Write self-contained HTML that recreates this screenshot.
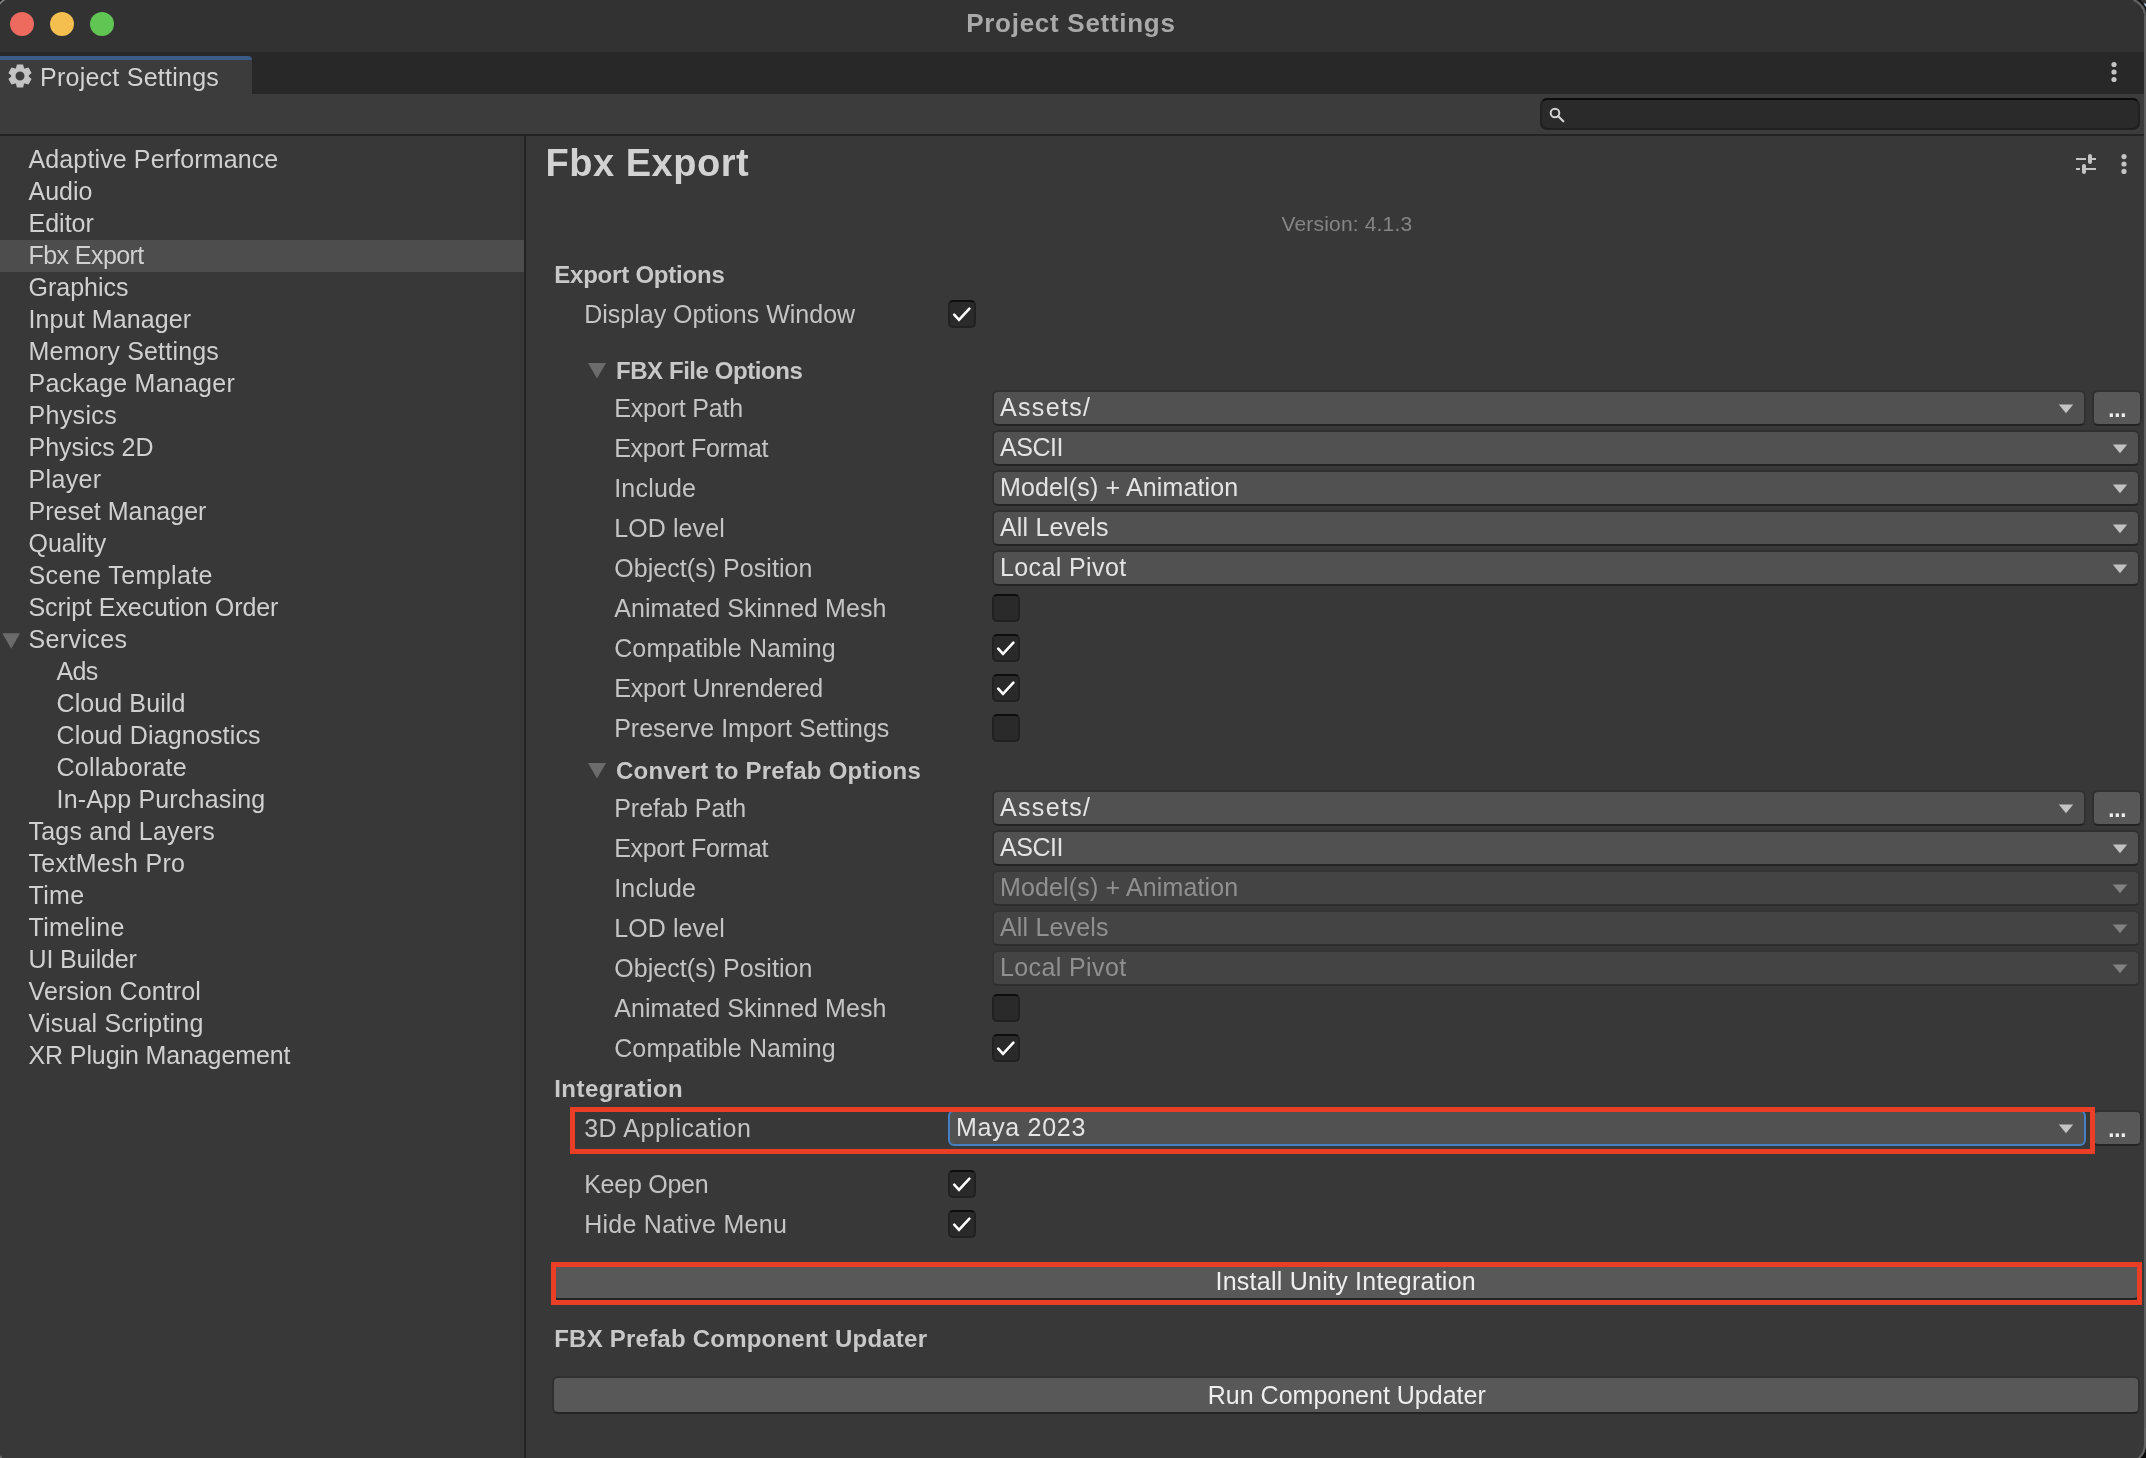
<!DOCTYPE html>
<html lang="en"><head><meta charset="utf-8"><title>Project Settings</title>
<style>
html,body{margin:0;padding:0;}
body{width:2146px;height:1458px;overflow:hidden;background:#383838;font-family:"Liberation Sans", sans-serif;color:#c4c4c4;}
#win{position:absolute;left:0;top:0;width:2146px;height:1458px;overflow:hidden;background:#383838;will-change:transform;}
.abs{position:absolute;}
.t{position:absolute;white-space:nowrap;font-size:25px;height:40px;line-height:40px;color:#c4c4c4;}
.b{font-weight:700;font-size:24px;color:#c8c8c8;}
.side{color:#d0d0d0;height:32px;line-height:32px;}
.dd{position:absolute;box-sizing:border-box;height:36px;border:2px solid #303030;border-bottom-color:#242424;border-radius:6px;background:#515151;}
.v{position:absolute;height:32px;line-height:32px;font-size:25px;color:#e4e4e4;white-space:nowrap;}
.dd.dis{background:#444444;border-color:#343434;border-bottom-color:#2e2e2e;}
.v.dis{color:#909090;}
.dd svg{position:absolute;right:10px;top:12px;}
.btn{position:absolute;box-sizing:border-box;height:36px;border:2px solid #303030;border-bottom-color:#242424;border-radius:6px;background:#585858;}
.bt{position:absolute;height:34px;line-height:34px;font-size:25px;color:#eeeeee;white-space:nowrap;}
.cb{position:absolute;box-sizing:border-box;width:28px;height:28px;border:2px solid #212121;border-top-color:#0d0d0d;border-radius:5px;background:#2a2a2a;}
.cb svg{position:absolute;left:-2px;top:-2px;}
.red{position:absolute;box-sizing:border-box;border:5px solid #ea3f26;}

</style></head><body><div id="win">
<div class="abs" style="left:0;top:0;width:2146px;height:52px;background:#323232;"></div>
<div class="abs" style="left:10px;top:12px;width:24px;height:24px;border-radius:50%;background:#ed6a5e;"></div>
<div class="abs" style="left:50px;top:12px;width:24px;height:24px;border-radius:50%;background:#f5bf4f;"></div>
<div class="abs" style="left:90px;top:12px;width:24px;height:24px;border-radius:50%;background:#61c554;"></div>
<div class="abs" id="wtitle" style="left:966.20px;top:0px;letter-spacing:0.720px;height:46px;line-height:46px;font-weight:700;font-size:26px;color:#a9a9a9;white-space:nowrap;">Project Settings</div>
<div class="abs" style="left:0;top:52px;width:2146px;height:42px;background:#282828;"></div>
<div class="abs" style="left:0;top:56px;width:252px;height:38px;background:#3c3c3c;border-top:4px solid #3a5c87;box-sizing:border-box;border-top-right-radius:4px;"></div>
<svg class="abs" style="left:0;top:56px" width="44" height="40" viewBox="0 56 44 40"><path d="M24.00 68.16 L23.11 64.41 L16.89 64.41 L16.00 68.16 L15.21 68.62 L11.51 67.51 L8.41 72.89 L11.21 75.54 L11.21 76.46 L8.41 79.11 L11.51 84.49 L15.21 83.38 L16.00 83.84 L16.89 87.59 L23.11 87.59 L24.00 83.84 L24.79 83.38 L28.49 84.49 L31.59 79.11 L28.79 76.46 L28.79 75.54 L31.59 72.89 L28.49 67.51 L24.79 68.62Z M15.50 76.00 a4.5 4.5 0 1 0 9.0 0 a4.5 4.5 0 1 0 -9.0 0Z" fill="#c4c4c4" fill-rule="evenodd"/></svg>
<div class="t" id="tabtxt" style="left:40.00px;top:57px;letter-spacing:0.247px;color:#d2d2d2;">Project Settings</div>
<svg class="abs" style="left:2104px;top:56px" width="20" height="32"><circle cx="10" cy="8.5" r="2.6" fill="#c4c4c4"/><circle cx="10" cy="16" r="2.6" fill="#c4c4c4"/><circle cx="10" cy="23.5" r="2.6" fill="#c4c4c4"/></svg>
<div class="abs" style="left:0;top:94px;width:2146px;height:40px;background:#3c3c3c;"></div>
<div class="abs" style="left:0;top:134px;width:2146px;height:2px;background:#232323;"></div>
<div class="abs" style="left:1540px;top:98px;width:600px;height:32px;box-sizing:border-box;border:2px solid #212121;border-top-color:#0d0d0d;border-radius:7px;background:#2a2a2a;"></div>
<svg class="abs" style="left:1546px;top:104px" width="24" height="22" viewBox="1546 104 24 22"><circle cx="1555" cy="113" r="4.3" fill="none" stroke="#d2d2d2" stroke-width="2"/><path d="M1558.2 116.2 L1563.3 121.3" stroke="#d2d2d2" stroke-width="2.2" stroke-linecap="round"/></svg>
<div class="abs" style="left:524px;top:136px;width:2px;height:1322px;background:#232323;"></div>
<div class="abs" style="left:0;top:240px;width:524px;height:32px;background:#4d4d4d;"></div>
<div class="t side" id="s0" style="left:28.50px;top:143px;letter-spacing:0.126px;">Adaptive Performance</div>
<div class="t side" id="s1" style="left:28.50px;top:175px;letter-spacing:0.000px;">Audio</div>
<div class="t side" id="s2" style="left:28.50px;top:207px;letter-spacing:0.000px;">Editor</div>
<div class="t side" id="s3" style="left:28.50px;top:239px;letter-spacing:-0.567px;">Fbx Export</div>
<div class="t side" id="s4" style="left:28.50px;top:271px;letter-spacing:0.000px;">Graphics</div>
<div class="t side" id="s5" style="left:28.50px;top:303px;letter-spacing:0.117px;">Input Manager</div>
<div class="t side" id="s6" style="left:28.50px;top:335px;letter-spacing:0.200px;">Memory Settings</div>
<div class="t side" id="s7" style="left:28.50px;top:367px;letter-spacing:0.236px;">Package Manager</div>
<div class="t side" id="s8" style="left:28.50px;top:399px;letter-spacing:0.333px;">Physics</div>
<div class="t side" id="s9" style="left:28.50px;top:431px;letter-spacing:0.000px;">Physics 2D</div>
<div class="t side" id="s10" style="left:28.50px;top:463px;letter-spacing:0.360px;">Player</div>
<div class="t side" id="s11" style="left:28.50px;top:495px;letter-spacing:0.000px;">Preset Manager</div>
<div class="t side" id="s12" style="left:28.50px;top:527px;letter-spacing:0.000px;">Quality</div>
<div class="t side" id="s13" style="left:28.50px;top:559px;letter-spacing:0.400px;">Scene Template</div>
<div class="t side" id="s14" style="left:28.50px;top:591px;letter-spacing:-0.076px;">Script Execution Order</div>
<div class="t side" id="s15" style="left:28.50px;top:623px;letter-spacing:0.371px;">Services</div>
<div class="t side" id="s16" style="left:56.50px;top:655px;letter-spacing:-0.650px;">Ads</div>
<div class="t side" id="s17" style="left:56.50px;top:687px;letter-spacing:0.100px;">Cloud Build</div>
<div class="t side" id="s18" style="left:56.50px;top:719px;letter-spacing:0.163px;">Cloud Diagnostics</div>
<div class="t side" id="s19" style="left:56.50px;top:751px;letter-spacing:0.230px;">Collaborate</div>
<div class="t side" id="s20" style="left:56.50px;top:783px;letter-spacing:0.188px;">In-App Purchasing</div>
<div class="t side" id="s21" style="left:28.50px;top:815px;letter-spacing:0.207px;">Tags and Layers</div>
<div class="t side" id="s22" style="left:28.50px;top:847px;letter-spacing:0.336px;">TextMesh Pro</div>
<div class="t side" id="s23" style="left:28.50px;top:879px;letter-spacing:0.333px;">Time</div>
<div class="t side" id="s24" style="left:28.50px;top:911px;letter-spacing:0.329px;">Timeline</div>
<div class="t side" id="s25" style="left:28.50px;top:943px;letter-spacing:-0.156px;">UI Builder</div>
<div class="t side" id="s26" style="left:28.50px;top:975px;letter-spacing:0.093px;">Version Control</div>
<div class="t side" id="s27" style="left:28.50px;top:1007px;letter-spacing:0.200px;">Visual Scripting</div>
<div class="t side" id="s28" style="left:28.50px;top:1039px;letter-spacing:-0.111px;">XR Plugin Management</div>
<svg class="abs" style="left:0;top:630px" width="24" height="22"><path d="M2.3 3.3 L20 3.3 L11.2 18.8Z" fill="#6b6b6b"/></svg>
<div class="abs" id="h1" style="left:545.50px;top:137px;letter-spacing:0.522px;height:52px;line-height:52px;font-weight:700;font-size:38px;white-space:nowrap;color:#d2d2d2;">Fbx Export</div>
<svg class="abs" style="left:2072px;top:150px" width="28" height="28" viewBox="2072 150 28 28"><g fill="#c4c4c4"><rect x="2076" y="158" width="10" height="2"/><rect x="2092" y="158" width="4" height="2"/><rect x="2088" y="154" width="4" height="10" rx="2"/><rect x="2076" y="168" width="4" height="2"/><rect x="2086" y="168" width="10" height="2"/><rect x="2082" y="164" width="4" height="10" rx="2"/></g></svg>
<svg class="abs" style="left:2114px;top:148px" width="20" height="32"><circle cx="10" cy="8.6" r="2.6" fill="#c4c4c4"/><circle cx="10" cy="16" r="2.6" fill="#c4c4c4"/><circle cx="10" cy="23.4" r="2.6" fill="#c4c4c4"/></svg>
<div class="abs" id="ver" style="left:1281.50px;top:204px;letter-spacing:0.169px;height:40px;line-height:40px;font-size:21px;color:#858585;white-space:nowrap;">Version: 4.1.3</div>
<div class="t b" id="t34" style="left:554.20px;top:255px;letter-spacing:-0.208px;">Export Options</div>
<div class="t" id="t35" style="left:584.20px;top:294px;letter-spacing:0.000px;">Display Options Window</div>
<div class="cb" style="left:948px;top:300px;"><svg width="28" height="28"><path d="M6.2 14.7 L11 19.8 L21.4 8.6" fill="none" stroke="#ffffff" stroke-width="2.6" stroke-linecap="round" stroke-linejoin="miter"/></svg></div>
<svg class="abs" style="left:584px;top:360px" width="26" height="22"><path d="M4 3 L22 3 L13 18.6Z" fill="#6b6b6b"/></svg>
<div class="t b" id="t36" style="left:616.00px;top:351px;letter-spacing:-0.440px;">FBX File Options</div>
<div class="t" id="t37" style="left:614.20px;top:388px;letter-spacing:-0.170px;">Export Path</div>
<div class="dd" style="left:992px;top:390px;width:1094px;"><svg width="16" height="10"><path d="M0.8 0.6 L15.2 0.6 L8 9.2Z" fill="#c4c4c4"/></svg></div>
<div class="v" id="t38" style="left:1000.00px;top:391px;letter-spacing:1.350px;">Assets/</div>
<div class="btn" style="left:2092px;top:390px;width:50px;"></div>
<div class="bt" style="left:2106.8px;top:389px;font-size:33px;letter-spacing:-3.17px;">...</div>
<div class="t" id="t39" style="left:614.20px;top:428px;letter-spacing:-0.333px;">Export Format</div>
<div class="dd" style="left:992px;top:430px;width:1148px;"><svg width="16" height="10"><path d="M0.8 0.6 L15.2 0.6 L8 9.2Z" fill="#c4c4c4"/></svg></div>
<div class="v" id="t40" style="left:1000.00px;top:431px;letter-spacing:-0.450px;">ASCII</div>
<div class="t" id="t41" style="left:614.20px;top:468px;letter-spacing:0.200px;">Include</div>
<div class="dd" style="left:992px;top:470px;width:1148px;"><svg width="16" height="10"><path d="M0.8 0.6 L15.2 0.6 L8 9.2Z" fill="#c4c4c4"/></svg></div>
<div class="v" id="t42" style="left:1000.00px;top:471px;letter-spacing:0.142px;">Model(s) + Animation</div>
<div class="t" id="t43" style="left:614.20px;top:508px;letter-spacing:0.100px;">LOD level</div>
<div class="dd" style="left:992px;top:510px;width:1148px;"><svg width="16" height="10"><path d="M0.8 0.6 L15.2 0.6 L8 9.2Z" fill="#c4c4c4"/></svg></div>
<div class="v" id="t44" style="left:1000.00px;top:511px;letter-spacing:0.178px;">All Levels</div>
<div class="t" id="t45" style="left:614.20px;top:548px;letter-spacing:0.053px;">Object(s) Position</div>
<div class="dd" style="left:992px;top:550px;width:1148px;"><svg width="16" height="10"><path d="M0.8 0.6 L15.2 0.6 L8 9.2Z" fill="#c4c4c4"/></svg></div>
<div class="v" id="t46" style="left:1000.00px;top:551px;letter-spacing:0.390px;">Local Pivot</div>
<div class="t" id="t47" style="left:614.20px;top:588px;letter-spacing:0.060px;">Animated Skinned Mesh</div>
<div class="cb" style="left:992px;top:594px;"></div>
<div class="t" id="t48" style="left:614.20px;top:628px;letter-spacing:0.119px;">Compatible Naming</div>
<div class="cb" style="left:992px;top:634px;"><svg width="28" height="28"><path d="M6.2 14.7 L11 19.8 L21.4 8.6" fill="none" stroke="#ffffff" stroke-width="2.6" stroke-linecap="round" stroke-linejoin="miter"/></svg></div>
<div class="t" id="t49" style="left:614.20px;top:668px;letter-spacing:-0.144px;">Export Unrendered</div>
<div class="cb" style="left:992px;top:674px;"><svg width="28" height="28"><path d="M6.2 14.7 L11 19.8 L21.4 8.6" fill="none" stroke="#ffffff" stroke-width="2.6" stroke-linecap="round" stroke-linejoin="miter"/></svg></div>
<div class="t" id="t50" style="left:614.20px;top:708px;letter-spacing:0.000px;">Preserve Import Settings</div>
<div class="cb" style="left:992px;top:714px;"></div>
<svg class="abs" style="left:584px;top:760px" width="26" height="22"><path d="M4 3 L22 3 L13 18.6Z" fill="#6b6b6b"/></svg>
<div class="t b" id="t51" style="left:616.00px;top:751px;letter-spacing:0.258px;">Convert to Prefab Options</div>
<div class="t" id="t52" style="left:614.20px;top:788px;letter-spacing:0.000px;">Prefab Path</div>
<div class="dd" style="left:992px;top:790px;width:1094px;"><svg width="16" height="10"><path d="M0.8 0.6 L15.2 0.6 L8 9.2Z" fill="#c4c4c4"/></svg></div>
<div class="v" id="t53" style="left:1000.00px;top:791px;letter-spacing:1.350px;">Assets/</div>
<div class="btn" style="left:2092px;top:790px;width:50px;"></div>
<div class="bt" style="left:2106.8px;top:789px;font-size:33px;letter-spacing:-3.17px;">...</div>
<div class="t" id="t54" style="left:614.20px;top:828px;letter-spacing:-0.333px;">Export Format</div>
<div class="dd" style="left:992px;top:830px;width:1148px;"><svg width="16" height="10"><path d="M0.8 0.6 L15.2 0.6 L8 9.2Z" fill="#c4c4c4"/></svg></div>
<div class="v" id="t55" style="left:1000.00px;top:831px;letter-spacing:-0.450px;">ASCII</div>
<div class="t" id="t56" style="left:614.20px;top:868px;letter-spacing:0.200px;">Include</div>
<div class="dd dis" style="left:992px;top:870px;width:1148px;"><svg width="16" height="10"><path d="M0.8 0.6 L15.2 0.6 L8 9.2Z" fill="#828282"/></svg></div>
<div class="v dis" id="t57" style="left:1000.00px;top:871px;letter-spacing:0.142px;">Model(s) + Animation</div>
<div class="t" id="t58" style="left:614.20px;top:908px;letter-spacing:0.100px;">LOD level</div>
<div class="dd dis" style="left:992px;top:910px;width:1148px;"><svg width="16" height="10"><path d="M0.8 0.6 L15.2 0.6 L8 9.2Z" fill="#828282"/></svg></div>
<div class="v dis" id="t59" style="left:1000.00px;top:911px;letter-spacing:0.178px;">All Levels</div>
<div class="t" id="t60" style="left:614.20px;top:948px;letter-spacing:0.053px;">Object(s) Position</div>
<div class="dd dis" style="left:992px;top:950px;width:1148px;"><svg width="16" height="10"><path d="M0.8 0.6 L15.2 0.6 L8 9.2Z" fill="#828282"/></svg></div>
<div class="v dis" id="t61" style="left:1000.00px;top:951px;letter-spacing:0.390px;">Local Pivot</div>
<div class="t" id="t62" style="left:614.20px;top:988px;letter-spacing:0.060px;">Animated Skinned Mesh</div>
<div class="cb" style="left:992px;top:994px;"></div>
<div class="t" id="t63" style="left:614.20px;top:1028px;letter-spacing:0.119px;">Compatible Naming</div>
<div class="cb" style="left:992px;top:1034px;"><svg width="28" height="28"><path d="M6.2 14.7 L11 19.8 L21.4 8.6" fill="none" stroke="#ffffff" stroke-width="2.6" stroke-linecap="round" stroke-linejoin="miter"/></svg></div>
<div class="t b" id="t64" style="left:554.20px;top:1069px;letter-spacing:0.460px;">Integration</div>
<div class="t" id="t65" style="left:584.20px;top:1108px;letter-spacing:0.531px;">3D Application</div>
<div class="dd" style="left:948px;top:1110px;width:1138px;border-color:#4580c5;"><svg width="16" height="10"><path d="M0.8 0.6 L15.2 0.6 L8 9.2Z" fill="#c4c4c4"/></svg></div>
<div class="v" id="t66" style="left:956.00px;top:1111px;letter-spacing:0.700px;">Maya 2023</div>
<div class="btn" style="left:2092px;top:1110px;width:50px;"></div>
<div class="bt" style="left:2106.8px;top:1109px;font-size:33px;letter-spacing:-3.17px;">...</div>
<div class="red" style="left:570px;top:1107px;width:1525px;height:47px;"></div>
<div class="t" id="t67" style="left:584.20px;top:1164px;letter-spacing:-0.250px;">Keep Open</div>
<div class="cb" style="left:948px;top:1170px;"><svg width="28" height="28"><path d="M6.2 14.7 L11 19.8 L21.4 8.6" fill="none" stroke="#ffffff" stroke-width="2.6" stroke-linecap="round" stroke-linejoin="miter"/></svg></div>
<div class="t" id="t68" style="left:584.20px;top:1204px;letter-spacing:0.260px;">Hide Native Menu</div>
<div class="cb" style="left:948px;top:1210px;"><svg width="28" height="28"><path d="M6.2 14.7 L11 19.8 L21.4 8.6" fill="none" stroke="#ffffff" stroke-width="2.6" stroke-linecap="round" stroke-linejoin="miter"/></svg></div>
<div class="btn" style="left:552px;top:1262px;width:1588px;height:38px;"></div>
<div class="bt" id="t69" style="left:1215.50px;top:1264px;letter-spacing:0.246px;">Install Unity Integration</div>
<div class="red" style="left:551px;top:1262px;width:1591px;height:43px;"></div>
<div class="t b" id="t70" style="left:554.20px;top:1319px;letter-spacing:0.226px;">FBX Prefab Component Updater</div>
<div class="btn" style="left:552px;top:1376px;width:1588px;height:38px;"></div>
<div class="bt" id="t71" style="left:1207.80px;top:1378px;letter-spacing:0.000px;">Run Component Updater</div>
<div class="abs" style="left:2144px;top:0;width:2px;height:1458px;background:#5e5e5e;"></div>
<svg class="abs" style="left:2116px;top:1428px" width="30" height="30" viewBox="2116 1428 30 30"><path d="M2146 1444 A20 20 0 0 1 2138 1460 L2146 1460Z" fill="#0a0a0a"/><path d="M2145 1428 L2145 1444 A19 19 0 0 1 2136.25 1460" fill="none" stroke="#636363" stroke-width="2"/></svg>
<svg class="abs" style="left:2126px;top:0" width="20" height="20" viewBox="2126 0 20 20"><path d="M2133 0 L2146 0 L2146 16 A20 20 0 0 0 2133 0Z" fill="#343434"/><path d="M2142.5 3.5 L2146 3.5 L2146 11.5 Z" fill="#a9c4dc"/><path d="M2137.5 -1 A21 21 0 0 1 2146.5 11" fill="none" stroke="#0c0c0c" stroke-width="1.6"/><path d="M2133.5 0 A19 19 0 0 1 2145 14" fill="none" stroke="#606060" stroke-width="2"/></svg>
<svg class="abs" style="left:0;top:0" width="10" height="10"><path d="M0 0 L2.2 0 Q0.8 0.8 0 2.2Z" fill="#161616"/><path d="M-1 4.9 Q1.2 1.2 5.6 -1" fill="none" stroke="#808080" stroke-width="1.6"/></svg>
<svg class="abs" style="left:0;top:1448px" width="10" height="10"><path d="M-1 7.6 Q0.6 9.4 2.4 11" fill="none" stroke="#6a6a6a" stroke-width="1.8"/></svg>
</div></body></html>
